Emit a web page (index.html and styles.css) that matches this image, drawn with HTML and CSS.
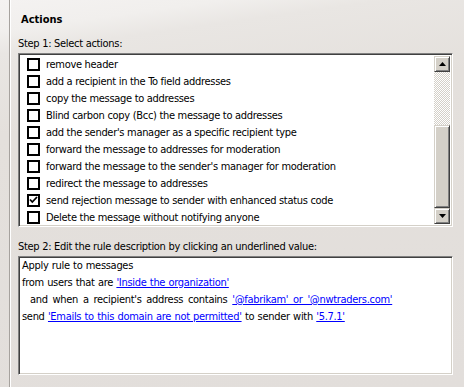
FILE: index.html
```html
<!DOCTYPE html>
<html lang="en">
<head>
  <meta charset="UTF-8">
  <title>Actions</title>
  <link rel="stylesheet" href="styles.css">
</head>
<body>
<div class="frame">
  <div class="title">Actions</div>
  <div class="label">Step 1: Select actions:</div>
  <div class="listbox">
    <ul class="items">
      <li><span class="cb"></span>remove header</li>
      <li><span class="cb"></span>add a recipient in the To field addresses</li>
      <li><span class="cb"></span>copy the message to addresses</li>
      <li><span class="cb"></span>Blind carbon copy (Bcc) the message to addresses</li>
      <li><span class="cb"></span>add the sender's manager as a specific recipient type</li>
      <li><span class="cb"></span>forward the message to addresses for moderation</li>
      <li><span class="cb"></span>forward the message to the sender's manager for moderation</li>
      <li><span class="cb"></span>redirect the message to addresses</li>
      <li><span class="cb checked"><svg width="9" height="9" viewBox="0 0 9 9"><path d="M1 3.5 L3.3 6 L8 1" fill="none" stroke="#000" stroke-width="1.8"/></svg></span>send rejection message to sender with enhanced status code</li>
      <li><span class="cb"></span>Delete the message without notifying anyone</li>
    </ul>
    <div class="scrollbar">
      <div class="btn"><svg width="7" height="4" viewBox="0 0 7 4"><path d="M3.5 0 L7 4 L0 4 Z" fill="#000"/></svg></div>
      <div class="track"></div>
      <div class="btn thumb"></div>
      <div class="track gap"></div>
      <div class="btn"><svg width="7" height="4" viewBox="0 0 7 4"><path d="M0 0 L7 0 L3.5 4 Z" fill="#000"/></svg></div>
    </div>
  </div>
  <div class="label step2">Step 2: Edit the rule description by clicking an underlined value:</div>
  <div class="desc">
    <div class="line">Apply rule to messages</div>
    <div class="line">from users that are <a href="#">'Inside the organization'</a></div>
    <div class="line indent">and when a recipient's address contains <a href="#">'@fabrikam' or '@nwtraders.com'</a></div>
    <div class="line">send <a href="#">'Emails to this domain are not permitted'</a> to sender with <a href="#">'5.7.1'</a></div>
  </div>
</div>
</body>
</html>
```

FILE: styles.css
```css
html, body {
  margin: 0;
  height: 100%;
}
body {
  width: 464px;
  height: 387px;
  overflow: hidden;
  font-family: "DejaVu Sans Condensed", "DejaVu Sans", sans-serif;
  font-size: 11px;
  letter-spacing: -0.3px;
  color: #000;
  background: linear-gradient(172deg, #f4f2f1 0, #f1efed 7%, #e9e6e3 12%, #e4e0dc 30%, #e2dedb 100%);
}
.frame {
  margin-left: 9px;
  height: 387px;
  border-left: 1px solid #a6a29e;
  box-shadow: inset 1px 0 #fff;
  padding-left: 8px;
  box-sizing: border-box;
  width: 455px;
}
.title {
  padding: 13px 0 0 3px;
  font-weight: bold;
  letter-spacing: 0;
  line-height: 14px;
}
.label {
  margin-top: 10px;
  line-height: 14px;
}
.label.step2 {
  margin-top: 13px;
}

.listbox, .desc {
  border: 1px solid;
  border-color: #808080 #fff #fff #808080;
  box-shadow: inset 1px 1px #404040, inset -1px -1px #d4d0c8;
  background: #fff;
  width: 435px;
  box-sizing: border-box;
  margin-top: 2px;
}
.listbox {
  height: 174px;
  padding: 2px;
  display: flex;
}
.items {
  list-style: none;
  margin: 0;
  padding: 0 0 0 6px;
  flex: 1;
}
.items li {
  height: 17px;
  line-height: 17px;
  display: flex;
  align-items: center;
  white-space: nowrap;
}
.cb {
  width: 13px;
  height: 13px;
  border: 2px solid #000;
  box-sizing: border-box;
  margin-right: 6px;
  flex: none;
  display: flex;
  align-items: center;
  justify-content: center;
}
.cb svg {
  display: block;
}

.scrollbar {
  width: 16px;
  display: flex;
  flex-direction: column;
}
.btn {
  height: 16px;
  box-sizing: border-box;
  background: #d4d0c8;
  border: 1px solid;
  border-color: #d4d0c8 #404040 #404040 #d4d0c8;
  box-shadow: inset 1px 1px #fff, inset -1px -1px #808080;
  display: flex;
  align-items: center;
  justify-content: center;
}
.btn.thumb {
  height: 84px;
}
.track {
  height: 54px;
  background: repeating-conic-gradient(#d4d0c8 0 25%, #fff 0 50%) 0 0 / 2px 2px;
}
.track.gap {
  height: 0;
}

.desc {
  height: 119px;
  padding: 0 3px;
}
.line {
  line-height: 17px;
  white-space: nowrap;
  word-spacing: 0.5px;
}
.line.indent {
  padding-left: 8px;
  word-spacing: 2px;
}
.desc a {
  color: #0000ff;
  text-decoration: underline;
}
```
